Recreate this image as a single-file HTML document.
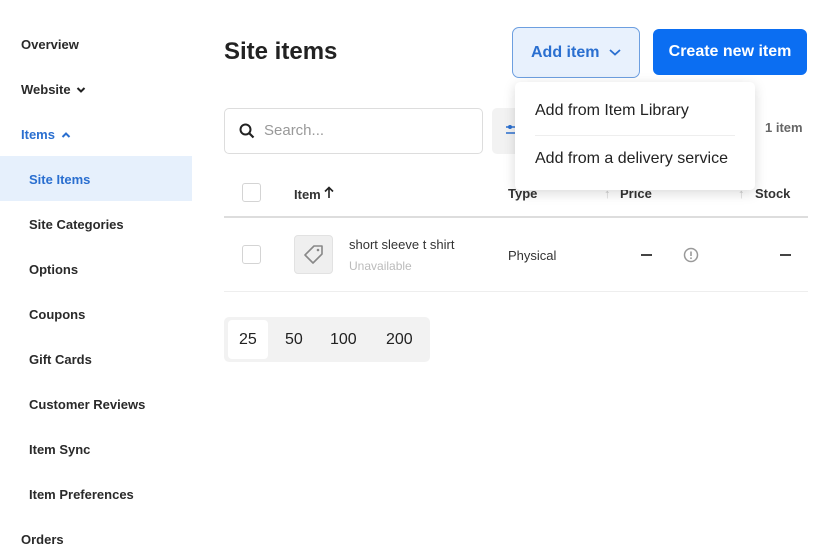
<!DOCTYPE html>
<html><head><style>
*{margin:0;padding:0;box-sizing:border-box}
body{width:830px;height:558px;background:#fff;font-family:"Liberation Sans",Arial,sans-serif;color:#222;position:relative;overflow:hidden}
.a{position:absolute}
.nav{font-size:13px;font-weight:bold;color:#2a2a2a;line-height:16px}
.hl{background:#e6f0fc}
.cb{width:19px;height:19px;border:1.5px solid #d4d4d4;border-radius:3px;background:#fff}
.th{font-size:13px;font-weight:bold;color:#333}
</style></head><body>
<div class="a hl" style="left:0;top:156px;width:192px;height:45px"></div>
<div class="a nav" style="left:21px;top:37px">Overview</div>
<div class="a nav" style="left:21px;top:82px">Website <svg width="10" height="8" viewBox="0 0 10 8" style="margin-left:2px"><path d="M1.5 2l3.5 3.5L8.5 2" stroke="#222" stroke-width="2" fill="none"/></svg></div>
<div class="a nav" style="left:21px;top:127px;color:#2a6fd0">Items <svg width="10" height="8" viewBox="0 0 10 8" style="margin-left:2px"><path d="M1.5 6L5 2.5 8.5 6" stroke="#2a6fd0" stroke-width="2" fill="none"/></svg></div>
<div class="a nav" style="left:29px;top:172px;color:#2a6fd0">Site Items</div>
<div class="a nav" style="left:29px;top:217px">Site Categories</div>
<div class="a nav" style="left:29px;top:262px">Options</div>
<div class="a nav" style="left:29px;top:307px">Coupons</div>
<div class="a nav" style="left:29px;top:352px">Gift Cards</div>
<div class="a nav" style="left:29px;top:397px">Customer Reviews</div>
<div class="a nav" style="left:29px;top:442px">Item Sync</div>
<div class="a nav" style="left:29px;top:487px">Item Preferences</div>
<div class="a nav" style="left:21px;top:532px">Orders</div>

<div class="a" style="left:224px;top:38px;font-size:24px;font-weight:bold;color:#222">Site items</div>
<div class="a" style="left:512px;top:27px;width:128px;height:51px;border:1.5px solid #6d9fe0;border-radius:7px;background:#e8f1fd;color:#2a6fd0;font-size:16px;font-weight:bold;line-height:50px;padding-left:18px">Add item <svg width="14" height="10" viewBox="0 0 14 10" style="margin-left:4px"><path d="M2 3l5 4.5L12 3" stroke="#2a6fd0" stroke-width="1.8" fill="none"/></svg></div>
<div class="a" style="left:653px;top:29px;width:154px;height:46px;border-radius:6px;background:#0b6ef2;color:#fff;font-size:16px;font-weight:bold;line-height:46px;text-align:center">Create new item</div>

<div class="a" style="left:224px;top:108px;width:259px;height:46px;border:1px solid #ddd;border-radius:5px"></div>
<svg class="a" style="left:238px;top:122px" width="18" height="18" viewBox="0 0 18 18"><circle cx="7.5" cy="7.5" r="5" stroke="#222" stroke-width="2" fill="none"/><path d="M11 11l4.5 4.5" stroke="#222" stroke-width="2.2"/></svg>
<div class="a" style="left:264px;top:122px;font-size:15px;color:#999">Search...</div>
<div class="a" style="left:492px;top:108px;width:40px;height:46px;background:#f2f2f2;border-radius:5px"></div>
<svg class="a" style="left:506px;top:123px" width="10" height="14" viewBox="0 0 10 14"><path d="M0 4h10M0 10h10" stroke="#2a6fd0" stroke-width="1.6"/><circle cx="4" cy="4" r="2" fill="#2a6fd0"/></svg>
<div class="a" style="left:765px;top:120px;font-size:13px;font-weight:bold;color:#666">1 item</div>

<div class="a cb" style="left:242px;top:183px"></div>
<div class="a th" style="left:294px;top:186px">Item <svg width="10" height="13" viewBox="0 0 10 13"><path d="M5 12V2M1 5.5L5 1.5 9 5.5" stroke="#222" stroke-width="1.6" fill="none"/></svg></div>
<div class="a th" style="left:508px;top:186px">Type</div>
<div class="a th" style="left:604px;top:186px;color:#ccc;font-weight:normal">↑</div>
<div class="a th" style="left:620px;top:186px">Price</div>
<div class="a th" style="left:738px;top:186px;color:#ccc;font-weight:normal">↑</div>
<div class="a th" style="left:755px;top:186px">Stock</div>
<div class="a" style="left:224px;top:216px;width:584px;height:2px;background:#ddd"></div>

<div class="a cb" style="left:242px;top:245px"></div>
<div class="a" style="left:294px;top:235px;width:39px;height:39px;background:#efefef;border:1px solid #e2e2e2;border-radius:4px"></div>
<svg class="a" style="left:301px;top:242px" width="26" height="26" viewBox="0 0 26 26"><path d="M13 4h8v8l-9 9-8-8z" stroke="#888" stroke-width="1.6" fill="none" stroke-linejoin="round"/><circle cx="17" cy="8" r="1.3" fill="#888"/></svg>
<div class="a" style="left:349px;top:237px;font-size:13px;color:#333">short sleeve t shirt</div>
<div class="a" style="left:349px;top:259px;font-size:12px;color:#bbb">Unavailable</div>
<div class="a" style="left:508px;top:248px;font-size:13px;color:#333">Physical</div>
<div class="a" style="left:641px;top:254px;width:11px;height:1.5px;background:#444"></div>
<svg class="a" style="left:683px;top:247px" width="16" height="16" viewBox="0 0 16 16"><circle cx="8" cy="8" r="6.5" stroke="#999" stroke-width="1.5" fill="none"/><path d="M8 4.5v4.5" stroke="#999" stroke-width="1.6"/><circle cx="8" cy="11.2" r="0.9" fill="#999"/></svg>
<div class="a" style="left:780px;top:254px;width:11px;height:1.5px;background:#444"></div>
<div class="a" style="left:224px;top:291px;width:584px;height:1px;background:#eee"></div>

<div class="a" style="left:224px;top:317px;width:206px;height:45px;background:#f2f2f2;border-radius:5px"></div>
<div class="a" style="left:228px;top:320px;width:40px;height:39px;background:#fff;border-radius:4px"></div>
<div class="a" style="left:239px;top:331px;font-size:16px;color:#222">25</div>
<div class="a" style="left:285px;top:331px;font-size:16px;color:#222">50</div>
<div class="a" style="left:330px;top:331px;font-size:16px;color:#222">100</div>
<div class="a" style="left:386px;top:331px;font-size:16px;color:#222">200</div>

<div class="a" style="left:515px;top:82px;width:240px;height:108px;background:#fff;border-radius:5px;box-shadow:0 3px 12px rgba(0,0,0,0.15)"></div>
<div class="a" style="left:535px;top:102px;font-size:16px;color:#222">Add from Item Library</div>
<div class="a" style="left:535px;top:135px;width:200px;height:1px;background:#eee"></div>
<div class="a" style="left:535px;top:150px;font-size:16px;color:#222">Add from a delivery service</div>
</body></html>
